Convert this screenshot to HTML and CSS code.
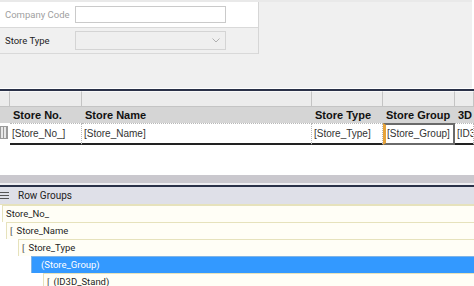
FILE: index.html
```html
<!DOCTYPE html>
<html>
<head>
<meta charset="utf-8">
<link rel="stylesheet" href="styles.css">
</head>
<body>
<div class="top">
  <div class="props">
    <div class="prow prow-white">
      <span class="plabel plabel-dis">Company Code</span>
      <div class="pinput"></div>
    </div>
    <div class="prow">
      <span class="plabel">Store Type</span>
      <div class="pselect">
        <svg class="chev" width="8" height="5" viewBox="0 0 8 5"><path d="M0.5 0.5 L4 4 L7.5 0.5" fill="none" stroke="#b0b0b0" stroke-width="1"/></svg>
      </div>
    </div>
  </div>
</div>
<div class="design">
  <div class="trow handles">
    <div class="c c0"></div>
    <div class="c c1"></div>
    <div class="c c2"></div>
    <div class="c c3"></div>
    <div class="c c4"></div>
    <div class="c c5"></div>
  </div>
  <div class="trow heads">
    <div class="c c0"></div>
    <div class="c c1">Store No.</div>
    <div class="c c2">Store Name</div>
    <div class="c c3">Store Type</div>
    <div class="c c4">Store Group</div>
    <div class="c c5">3D</div>
  </div>
  <div class="trow data">
    <div class="c c0"><span class="rh"></span></div>
    <div class="c c1">[Store_No_]</div>
    <div class="c c2">[Store_Name]</div>
    <div class="c c3">[Store_Type]</div>
    <div class="c c4 sel">[Store_Group]</div>
    <div class="c c5">[ID3</div>
  </div>
</div>
<div class="split"></div>
<div class="groups">
  <div class="ghead">
    <svg class="gicon" width="9" height="9" viewBox="0 0 9 9"><path d="M0 1.5H9M0 4.5H9M0 7.5H9" stroke="#555" stroke-width="1"/></svg>
    <span>Row Groups</span>
  </div>
  <div class="glist">
    <div class="g g0">Store_No_</div>
    <div class="g g1"><span class="br">[</span>Store_Name</div>
    <div class="g g2"><span class="br">[</span>Store_Type</div>
    <div class="g g3 gsel">(Store_Group)</div>
    <div class="g g4"><span class="br">[</span>(ID3D_Stand)</div>
  </div>
</div>
</body>
</html>
```
FILE: styles.css
```css
html, body {
  margin: 0;
  padding: 0;
}
body {
  width: 474px;
  height: 286px;
  overflow: hidden;
  background: #ffffff;
  font-family: Roboto, "Noto Sans", sans-serif;
}
.top {
  height: 86px;
  width: 472px;
  background: #f0f0f0;
  border-top: 2px solid #e9e9e9;
}
.props {
  width: 258px;
  border-right: 1px solid #d6d6d6;
}
.prow {
  display: flex;
  align-items: center;
  height: 25px;
  border-bottom: 1px solid #d9d9d9;
  background: #f0f0f0;
}
.prow-white {
  background: #ffffff;
}
.plabel {
  width: 70px;
  padding-left: 5px;
  font-size: 9.5px;
  color: #1e1e1e;
  white-space: nowrap;
}
.plabel-dis {
  color: #a0a0a0;
}
.pinput {
  width: 149px;
  height: 15px;
  border: 1px solid #cacaca;
  background: #ffffff;
}
.pselect {
  width: 149px;
  height: 17px;
  border: 1px solid #d4d4d4;
  background: #efefef;
  display: flex;
  align-items: center;
  justify-content: flex-end;
}
.chev {
  margin-right: 5px;
}
.design {
  border-top: 1px solid #ffffff;
}
.trow {
  display: flex;
}
.c {
  flex: none;
  box-sizing: border-box;
  white-space: nowrap;
  overflow: hidden;
}
.c0 { width: 10px; }
.c1 { width: 72px; }
.c2 { width: 230px; }
.c3 { width: 71px; }
.c4 { width: 72px; }
.c5 { width: 19px; }
.handles {
  height: 16px;
  border-top: 2px solid #2a3148;
  background: #ececec;
}
.handles .c {
  border-right: 1px solid #c4c4c4;
  border-bottom: 1px solid #c4c4c4;
  border-top: 1px solid #f8f8f8;
}
.heads {
  height: 16px;
  background: #d5d5d5;
  font-family: "Liberation Sans", Arial, sans-serif;
  font-weight: bold;
  font-size: 11px;
  color: #111;
  line-height: 16px;
}
.heads .c {
  padding-left: 3px;
}
.data {
  height: 22px;
  font-family: "Liberation Sans", Arial, sans-serif;
  font-size: 10px;
  color: #333;
  line-height: 20px;
}
.data .c {
  padding-left: 2px;
  background: #ffffff;
  border-top: 1px dotted #b8b8b8;
  border-right: 1px dotted #b8b8b8;
  border-bottom: 2px solid #222;
}
.data .c0 {
  background: #ffffff;
  border-bottom: none;
  border-top: none;
  border-right: none;
  padding: 3px 0 0 0;
}
.rh {
  display: block;
  width: 8px;
  height: 13px;
  box-sizing: border-box;
  border: 1px solid #9a9a9a;
  background: repeating-linear-gradient(90deg, #e8e8e8 0 2px, #9a9a9a 2px 3px);
}
.data .sel {
  border: 2px solid #6a6a6a;
  border-left: 3px solid #e6a33a;
  padding-left: 1px;
  line-height: 17px;
}
.split {
  margin-top: 30px;
  height: 8px;
  background: #cac8ce;
  border-bottom: 2px solid #eeeef2;
}
.groups {
  border-top: 2px solid #2a3148;
}
.ghead {
  height: 17px;
  background: #dfe0e8;
  border-bottom: 1px solid #e6e2bc;
  display: flex;
  align-items: center;
  font-size: 10px;
  color: #222;
}
.gicon {
  margin-right: 9px;
}
.g {
  height: 16px;
  line-height: 16px;
  font-size: 9.5px;
  color: #1e1e1e;
  background: #fffef6;
  border-top: 1px solid #e6e2bc;
  border-left: 1px solid #e6e2bc;
  padding-left: 3px;
  white-space: nowrap;
}
.g0 { margin-left: 2px; }
.g1 { margin-left: 6px; }
.g2 { margin-left: 18px; }
.g3 { margin-left: 31px; }
.g4 { margin-left: 43px; }
.br {
  margin-right: 4px;
  color: #555;
}
.gsel {
  background: #3399ff;
  color: #ffffff;
  padding-left: 9px;
  border-color: #7fb4e6;
}
```
